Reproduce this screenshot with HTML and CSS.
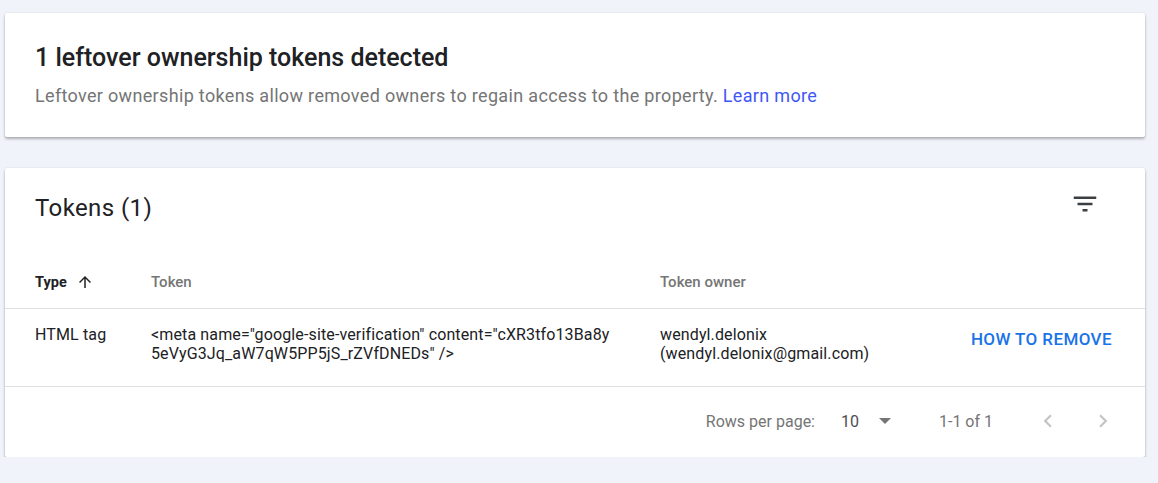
FILE: index.html
```html
<!DOCTYPE html>
<html>
<head>
<meta charset="utf-8">
<link rel="stylesheet" href="styles.css">
</head>
<body>
<div class="page">
  <section class="card intro">
    <h1 class="intro-title">1 leftover ownership tokens detected</h1>
    <p class="intro-text">Leftover ownership tokens allow removed owners to regain access to the property. <a class="link" href="#">Learn more</a></p>
  </section>

  <section class="card tokens">
    <div class="tokens-head">
      <h2 class="tokens-title">Tokens (1)</h2>
      <svg class="filter-icon" viewBox="0 0 24 24" width="30" height="30"><path d="M10 18h4v-2h-4v2zM3 6v2h18V6H3zm3 7h12v-2H6v2z" fill="#3c4043"/></svg>
    </div>
    <div class="grid head-row">
      <div class="th th-active">Type <svg class="sort-icon" viewBox="0 0 24 24" width="18" height="18"><path d="M4 12l1.41 1.41L11 7.83V20h2V7.83l5.58 5.59L20 12l-8-8-8 8z" fill="#202124"/></svg></div>
      <div class="th">Token</div>
      <div class="th">Token owner</div>
      <div class="th"></div>
    </div>
    <div class="grid body-row">
      <div class="td">HTML tag</div>
      <div class="td token">&lt;meta name="google-site-verification" content="cXR3tfo13Ba8y<br>5eVyG3Jq_aW7qW5PP5jS_rZVfDNEDs" /&gt;</div>
      <div class="td">wendyl.delonix<br>(wendyl.delonix@gmail.com)</div>
      <div class="td action"><a class="remove" href="#">HOW TO REMOVE</a></div>
    </div>
    <div class="footer">
      <span class="rpp-label">Rows per page:</span>
      <span class="rpp-value">10</span>
      <svg class="drop" viewBox="0 0 12 6" width="12" height="6"><path d="M0 0l6 6 6-6z" fill="#757575"/></svg>
      <span class="range">1-1 of 1</span>
      <svg class="chev prev" viewBox="0 0 24 24" width="26" height="26"><path d="M15.41 7.41L14 6l-6 6 6 6 1.41-1.41L10.83 12z" fill="#c4c4c4"/></svg>
      <svg class="chev next" viewBox="0 0 24 24" width="26" height="26"><path d="M10 6L8.59 7.41 13.17 12l-4.58 4.59L10 18l6-6z" fill="#c4c4c4"/></svg>
    </div>
  </section>
</div>
</body>
</html>
```

FILE: styles.css
```css
html, body {
  margin: 0;
  padding: 0;
  background: #f0f3fa;
}
body {
  font-family: Roboto, "Liberation Sans", Arial, sans-serif;
  color: #202124;
}
.page {
  padding: 13px 13px 0 5px;
  display: flex;
  flex-direction: column;
  gap: 31px;
}
.card {
  background: #fff;
  border-radius: 2px;
  box-shadow: 0 2px 3px rgba(0,0,0,0.28), 0 0 2px rgba(0,0,0,0.1);
}
.intro {
  padding: 31px 30px 29px;
  height: 124px;
  box-sizing: border-box;
}
.intro-title {
  margin: 0;
  font-size: 25px;
  line-height: 28px;
  font-weight: 500;
  color: #202124;
}
.intro-text {
  margin: 12px 0 0;
  font-size: 18px;
  line-height: 24px;
  letter-spacing: 0.33px;
  color: #757575;
}
.link {
  color: #3f57f5;
  text-decoration: none;
}
.tokens {
  height: 289px;
  box-sizing: border-box;
  display: flex;
  flex-direction: column;
}
.tokens-head {
  display: flex;
  align-items: center;
  justify-content: space-between;
  padding: 24px 45px 0 30px;
  height: 56px;
  box-sizing: border-box;
}
.tokens-title {
  margin: 0;
  font-size: 24px;
  line-height: 32px;
  letter-spacing: 0.4px;
  font-weight: 400;
  color: #202124;
}
.filter-icon {
  display: block;
  margin-top: -8px;
}
.grid {
  display: grid;
  grid-template-columns: 116px 509px 1fr auto;
  padding: 0 33px 0 30px;
  border-bottom: 1px solid #e0e0e0;
}
.head-row {
  height: 85px;
  box-sizing: border-box;
  align-items: center;
  padding-top: 32px;
}
.th {
  font-size: 15px;
  font-weight: 500;
  color: #757575;
  display: flex;
  align-items: center;
}
.th-active {
  font-weight: 700;
  font-size: 14.5px;
  color: #202124;
}
.sort-icon {
  margin-left: 9px;
}
.body-row {
  height: 78px;
  box-sizing: border-box;
  padding-top: 16px;
  align-items: start;
}
.td {
  font-size: 16px;
  line-height: 19px;
  letter-spacing: 0.13px;
  color: #202124;
}
.action {
  padding-top: 5px;
}
.remove {
  font-size: 17px;
  font-weight: 500;
  color: #1a73e8;
  text-decoration: none;
  letter-spacing: 0.4px;
}
.footer {
  flex: 1;
  display: flex;
  align-items: center;
  justify-content: flex-end;
  padding: 0 29px 2px 0;
  font-size: 16px;
  color: #757575;
}
.rpp-value {
  margin-left: 26px;
  color: #202124;
  opacity: 0.8;
}
.drop {
  margin-left: 20px;
}
.range {
  margin-left: 48px;
}
.chev.prev {
  margin-left: 42px;
}
.chev.next {
  margin-left: 29px;
}
```
